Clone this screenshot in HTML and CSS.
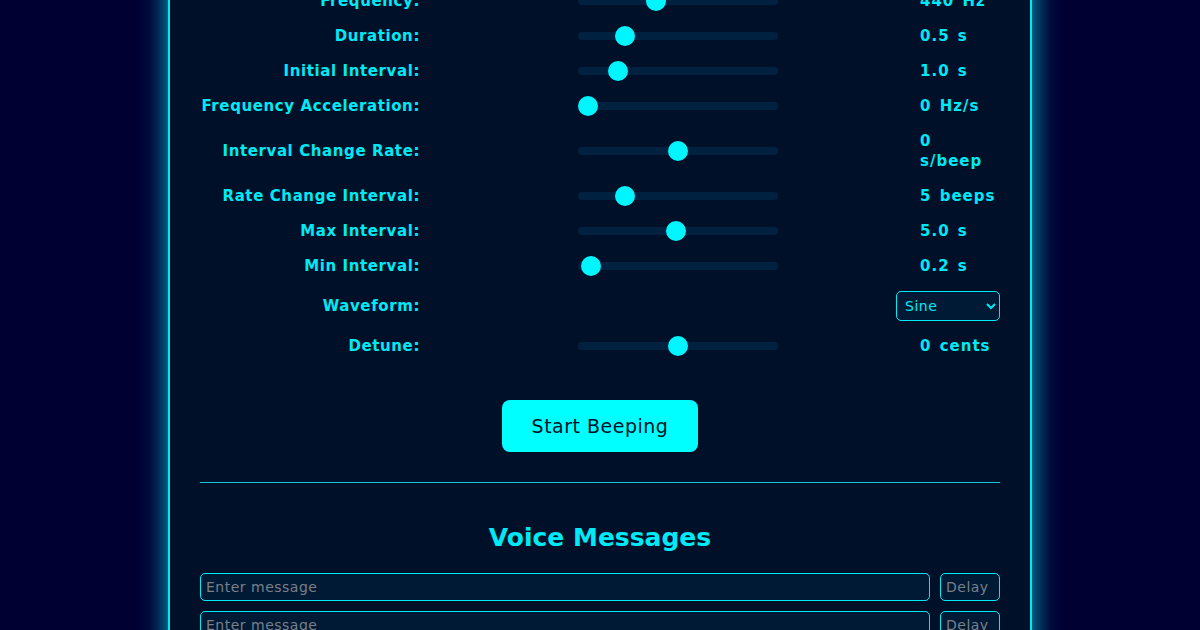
FILE: index.html
```html
<!DOCTYPE html>
<html lang="en">
<head>
<meta charset="utf-8">
<title>Beep Generator</title>
<link rel="stylesheet" href="styles.css">
</head>
<body>
<div class="panel">
  <div class="row"><label class="lbl">Frequency:</label><input class="slider" type="range" min="0" max="1000" value="378"><span class="val">440 Hz</span></div>
  <div class="row"><label class="lbl">Duration:</label><input class="slider" type="range" min="0" max="1000" value="206"><span class="val">0.5 s</span></div>
  <div class="row"><label class="lbl">Initial Interval:</label><input class="slider" type="range" min="0" max="1000" value="167"><span class="val">1.0 s</span></div>
  <div class="row"><label class="lbl">Frequency Acceleration:</label><input class="slider" type="range" min="0" max="1000" value="0"><span class="val">0 Hz/s</span></div>
  <div class="row"><label class="lbl">Interval Change Rate:</label><input class="slider" type="range" min="0" max="1000" value="500"><span class="val">0 s/beep</span></div>
  <div class="row"><label class="lbl">Rate Change Interval:</label><input class="slider" type="range" min="0" max="1000" value="206"><span class="val">5 beeps</span></div>
  <div class="row"><label class="lbl">Max Interval:</label><input class="slider" type="range" min="0" max="1000" value="489"><span class="val">5.0 s</span></div>
  <div class="row"><label class="lbl">Min Interval:</label><input class="slider" type="range" min="0" max="1000" value="17"><span class="val">0.2 s</span></div>
  <div class="row"><label class="lbl">Waveform:</label><select class="wave"><option>Sine</option><option>Square</option><option>Sawtooth</option><option>Triangle</option></select></div>
  <div class="row"><label class="lbl">Detune:</label><input class="slider" type="range" min="0" max="1000" value="500"><span class="val">0 cents</span></div>

  <div class="actions"><button class="start">Start Beeping</button></div>

  <hr class="divider">

  <h2 class="heading">Voice Messages</h2>
  <div class="msg-row"><input class="msg" type="text" placeholder="Enter message"><input class="delay" type="text" placeholder="Delay"></div>
  <div class="msg-row"><input class="msg" type="text" placeholder="Enter message"><input class="delay" type="text" placeholder="Delay"></div>
</div>
</body>
</html>
```

FILE: styles.css
```css
html, body {
  margin: 0;
  padding: 0;
}
body {
  background: #000033;
  font-family: "DejaVu Sans", "Liberation Sans", sans-serif;
  color: #00eaf5;
  overflow: hidden;
  height: 630px;
}
.panel {
  box-sizing: border-box;
  width: 864px;
  margin: -41px auto 0;
  padding: 30px;
  background: #001028;
  border: 2px solid #00eaf5;
  box-shadow: 0 0 25px rgba(0, 234, 245, 0.8);
}
.row {
  display: flex;
  align-items: center;
  justify-content: space-between;
  margin-bottom: 15px;
  min-height: 20px;
}
.lbl {
  box-sizing: border-box;
  width: 236px;
  padding-right: 16px;
  text-align: right;
  font-size: 15px;
  font-weight: bold;
  letter-spacing: 0.6px;
  line-height: 20px;
}
.val {
  width: 80px;
  font-size: 15px;
  line-height: 20px;
  font-weight: bold;
  letter-spacing: 1px;
  word-spacing: 2px;
}
.slider {
  -webkit-appearance: none;
  appearance: none;
  width: 200px;
  height: 8px;
  margin: 0;
  background: #00213f;
  border-radius: 4px;
  outline: none;
}
.slider::-webkit-slider-thumb {
  -webkit-appearance: none;
  appearance: none;
  width: 20px;
  height: 20px;
  border-radius: 50%;
  background: #00f5ff;
  border: none;
}
.wave {
  box-sizing: border-box;
  width: 104px;
  height: 30px;
  padding: 0 4px;
  background: #001a35;
  color: #00eaf5;
  border: 1px solid #00eaf5;
  border-radius: 5px;
  font-family: "DejaVu Sans", sans-serif;
  font-size: 14px;
  letter-spacing: 0.5px;
}
.actions {
  display: flex;
  justify-content: center;
  margin-top: 44px;
}
.start {
  width: 196px;
  height: 52px;
  background: #00ffff;
  color: #001028;
  border: none;
  border-radius: 8px;
  font-family: "DejaVu Sans", sans-serif;
  font-size: 19px;
  letter-spacing: 0.5px;
}
.divider {
  border: none;
  border-top: 1px solid #18c8d8;
  margin: 30px 0 0;
}
.heading {
  text-align: center;
  font-size: 25px;
  font-weight: bold;
  line-height: 30px;
  margin: 40px 0 20px;
}
.msg-row {
  display: flex;
  gap: 10px;
  margin-bottom: 10px;
}
.msg, .delay {
  box-sizing: border-box;
  height: 28px;
  padding: 0 5px;
  background: #001a35;
  color: #00eaf5;
  border: 1px solid #00eaf5;
  border-radius: 5px;
  font-family: "DejaVu Sans", sans-serif;
  font-size: 14px;
  letter-spacing: 0.5px;
}
.msg {
  flex: 1;
}
.delay {
  width: 60px;
}
.msg::placeholder, .delay::placeholder {
  color: #7a7f8a;
}
```
